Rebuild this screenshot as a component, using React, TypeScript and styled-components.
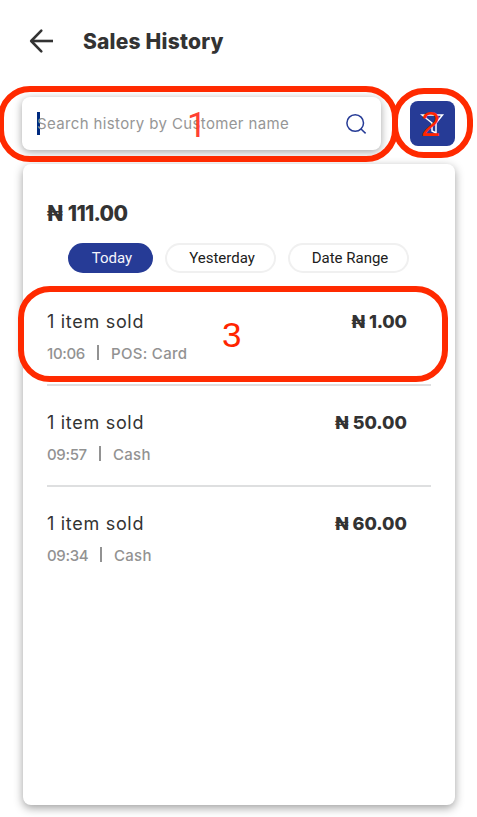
import React from "react";
import styled, { createGlobalStyle, css } from "styled-components";

const GlobalStyle = createGlobalStyle`
  *, *::before, *::after { box-sizing: border-box; }
  body { margin: 0; background: #fff; font-family: Inter, "Open Sans", sans-serif; overflow: hidden; }
  button { font: inherit; padding: 0; border: 0; background: none; }
`;

const Screen = styled.main`
  position: relative;
  width: 477px;
  height: 817px;
  overflow: hidden;
  background: #fff;
  color: #333;
`;

const Header = styled.header`
  display: flex;
  align-items: center;
  gap: 28px;
  height: 82px;
  padding-left: 28px;
`;

const BackButton = styled.button`
  display: flex;
  width: 27px;
  height: 28px;
`;

const Title = styled.h1`
  margin: 0;
  padding-top: 2px;
  font-size: 21px;
  line-height: 28px;
  font-weight: 800;
  letter-spacing: 0.2px;
`;

const SearchRow = styled.div`
  display: flex;
  align-items: center;
  justify-content: space-between;
  height: 53px;
  margin: 15px 22px 0;
`;

const SearchField = styled.div`
  display: flex;
  align-items: center;
  width: 359px;
  height: 53px;
  padding: 0 14px 0 15px;
  border-radius: 8px;
  background: #fff;
  box-shadow: 0 2px 8px rgba(0, 0, 0, 0.36);
`;

const Caret = styled.span`
  width: 3px;
  height: 23px;
  margin-right: -3px;
  background: #002a7f;
`;

const Placeholder = styled.span`
  flex: 1;
  color: #969696;
  font-size: 15px;
  line-height: 20px;
  letter-spacing: 0.37px;
  white-space: nowrap;
`;

const FilterButton = styled.button`
  display: grid;
  place-items: center;
  width: 45px;
  height: 45px;
  border-radius: 8px;
  background: #263b96;
`;

const Card = styled.section`
  width: 432px;
  height: 641px;
  margin: 14px 0 0 23px;
  padding: 35px 24px 0;
  border-radius: 8px;
  background: #fff;
  box-shadow: 0 3px 10px rgba(0, 0, 0, 0.38);
`;

const Amount = styled.div<{ $large?: boolean }>`
  display: flex;
  font-weight: 800;
  white-space: nowrap;
  ${({ $large }) =>
    $large
      ? css`
          font-size: 21px;
          line-height: 30px;
          gap: 5px;
        `
      : css`
          font-size: 18px;
          line-height: 24px;
          gap: 4px;
          margin-right: 24px;
        `}
`;

const Figure = styled.span<{ $spacing: number }>`
  letter-spacing: ${({ $spacing }) => $spacing}px;
  margin-right: ${({ $spacing }) => -$spacing}px;
`;

const Chips = styled.div`
  display: flex;
  gap: 12px;
  margin: 14px 0 0 21px;
`;

const Chip = styled.button<{ $active?: boolean; $width: number }>`
  width: ${({ $width }) => $width}px;
  height: 30px;
  border: 2px solid ${({ $active }) => ($active ? "#263b96" : "#f0f0f0")};
  border-radius: 15px;
  background: ${({ $active }) => ($active ? "#263b96" : "#fff")};
  color: ${({ $active }) => ($active ? "#f4f5fb" : "#202020")};
  font-family: Roboto, sans-serif;
  font-size: 15px;
  line-height: 26px;
  text-align: center;
  padding-left: 3px;
`;

const SalesList = styled.ul`
  list-style: none;
  margin: 12px 0 0;
  padding: 0;
`;

const Sale = styled.li`
  height: 101px;
  padding-top: 25px;
  border-bottom: 2px solid #dedfe0;
  &:last-child { border-color: transparent; }
`;

const SaleTop = styled.div`
  display: flex;
  justify-content: space-between;
  height: 24px;
`;

const SaleTitle = styled.span`
  font-size: 18px;
  line-height: 24px;
  letter-spacing: 0.7px;
`;

const SaleMeta = styled.div`
  display: flex;
  align-items: center;
  height: 20px;
  margin-top: 10px;
  color: #929292;
  font-size: 15px;
  line-height: 20px;
  font-weight: 500;
  white-space: nowrap;
`;

const Time = styled.span<{ $width: number }>`
  width: ${({ $width }) => $width}px;
  letter-spacing: -0.35px;
`;

const Method = styled.span`
  letter-spacing: 0.3px;
`;

const Separator = styled.i`
  width: 2px;
  height: 15px;
  margin: 0 12px 3px 0;
  background: #929292;
`;

const Ring = styled.div<{ $x: number; $y: number; $w: number; $h: number }>`
  position: absolute;
  left: ${({ $x }) => $x}px;
  top: ${({ $y }) => $y}px;
  width: ${({ $w }) => $w}px;
  height: ${({ $h }) => $h}px;
  border: 6px solid #ff2a00;
  border-radius: 32px;
`;

const Marker = styled.span<{ $x: number; $y: number; $plain?: boolean }>`
  position: absolute;
  left: ${({ $x }) => $x}px;
  top: ${({ $y }) => $y}px;
  font: 35px/40px ${({ $plain }) => ($plain ? "Roboto" : '"Liberation Sans"')}, Arial, sans-serif;
  color: ${({ $plain }) => ($plain ? "#ff4033" : "#ff2500")};
`;

const sales = [
  { time: "10:06", timeWidth: 50, method: "POS: Card", amount: "1.00", spacing: -0.2 },
  { time: "09:57", timeWidth: 52, method: "Cash", amount: "50.00", spacing: 0 },
  { time: "09:34", timeWidth: 53, method: "Cash", amount: "60.00", spacing: 0 },
];

export default function App() {
  return (
    <Screen>
      <GlobalStyle />
      <Header>
        <BackButton aria-label="Back">
          <svg width="27" height="28" viewBox="0 0 27 28" fill="none" stroke="#333" strokeWidth="2.6">
            <path d="M13.300 3.700 3.200 14l10.100 10.300" strokeLinecap="round" strokeLinejoin="round" />
            <path d="M3 14h22" />
          </svg>
        </BackButton>
        <Title>Sales History</Title>
      </Header>
      <SearchRow>
        <SearchField>
          <Caret />
          <Placeholder>Search history by Customer name</Placeholder>
          <svg width="22" height="22" viewBox="0 0 22 22" fill="none" stroke="#263b96" strokeWidth="1.5">
            <circle cx="10.2" cy="10" r="8.3" />
            <path d="m16 16 4.6 4.4" />
          </svg>
        </SearchField>
        <FilterButton aria-label="Filter">
          <svg width="25" height="22" viewBox="0 0 25 22" fill="none" stroke="#fff" strokeWidth="1.5">
            <path d="M2 2h20.500l-6.500 8v10l-4-2v-8Z" />
          </svg>
        </FilterButton>
      </SearchRow>
      <Card>
        <Amount $large>
          <span>₦</span>
          <Figure $spacing={-0.7}>111.00</Figure>
        </Amount>
        <Chips>
          <Chip $active $width={85}>Today</Chip>
          <Chip $width={111}>Yesterday</Chip>
          <Chip $width={121}>Date Range</Chip>
        </Chips>
        <SalesList>
          {sales.map((sale) => (
            <Sale key={sale.time}>
              <SaleTop>
                <SaleTitle>1 item sold</SaleTitle>
                <Amount>
                  <span>₦</span>
                  <Figure $spacing={sale.spacing}>{sale.amount}</Figure>
                </Amount>
              </SaleTop>
              <SaleMeta>
                <Time $width={sale.timeWidth}>{sale.time}</Time>
                <Separator />
                <Method>{sale.method}</Method>
              </SaleMeta>
            </Sale>
          ))}
        </SalesList>
      </Card>
      <Ring $x={-2} $y={86} $w={400} $h={76} />
      <Ring $x={392} $y={88} $w={81} $h={70} />
      <Ring $x={18} $y={286} $w={430} $h={96} />
      <Marker $x={187} $y={106} $plain>1</Marker>
      <Marker $x={421} $y={104}>2</Marker>
      <Marker $x={222} $y={315}>3</Marker>
    </Screen>
  );
}
